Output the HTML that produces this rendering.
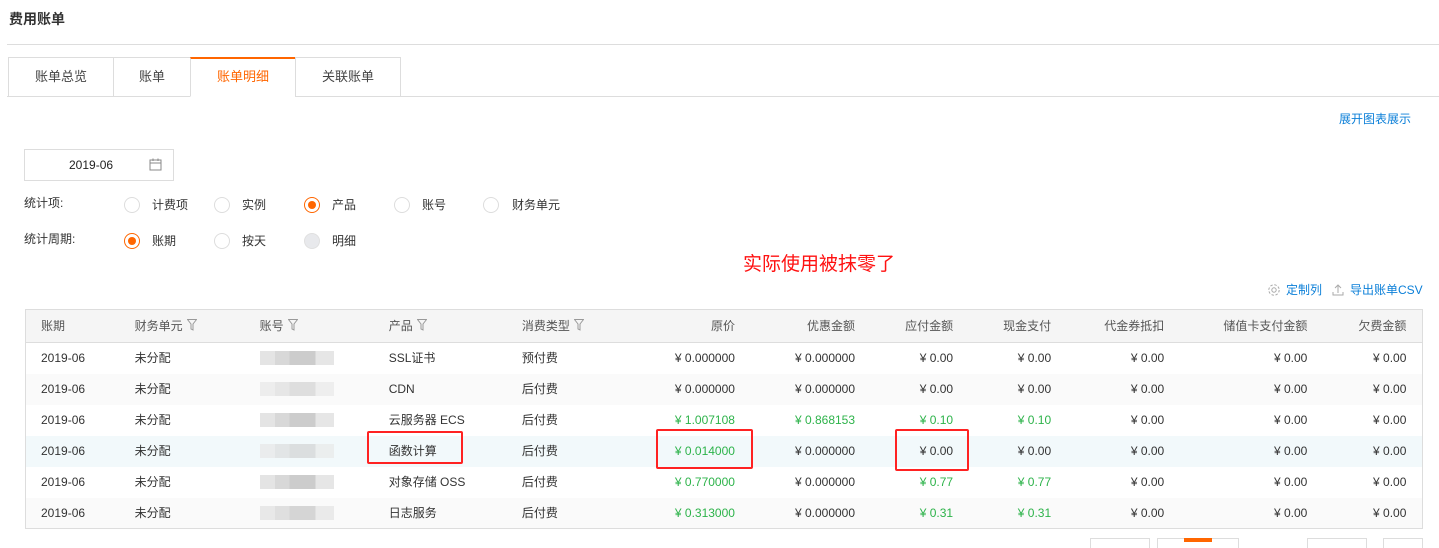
<!DOCTYPE html>
<html><head><meta charset="utf-8"><style>
*{margin:0;padding:0;box-sizing:border-box}
body{width:1439px;height:542px;overflow:hidden;background:#fff;font-family:"Liberation Sans","Noto Sans CJK SC",sans-serif;font-size:12px;color:#333;position:relative}
.a{position:absolute;line-height:14px}
.tab{position:absolute;top:57px;height:40px;border:1px solid #ddd;background:#fff;line-height:38px;text-align:center;font-size:13px;color:#444}
.radio{position:absolute;width:16px;height:16px;border:1px solid #ddd;border-radius:50%;background:#fff}
.radio.on{border-color:#f60}
.radio.on:after{content:"";position:absolute;left:3px;top:3px;width:8px;height:8px;border-radius:50%;background:#f60}
.lbl{position:absolute;font-size:12px;color:#333;line-height:14px}
table{position:absolute;left:25px;top:309px;width:1398px;border:1px solid #ddd;border-collapse:collapse;table-layout:fixed}
td,th{height:31px;font-weight:normal;white-space:nowrap;font-size:12px;line-height:14px;padding:0;vertical-align:middle}
th{height:33px;background:#f5f5f5;color:#555;border-bottom:1px solid #ddd;text-align:left}
.r{text-align:right}
tr:nth-child(odd) td{background:#fafafa}
tr.hl td{background:#f2f9fb!important}
.g{color:#2db34a}
.f{display:inline-block;width:10px;height:12px;vertical-align:-1px;margin-left:4px}
.blur{position:absolute;left:260px;width:74px;height:14px;background:linear-gradient(90deg,#e4e4e4 0 20%,#d8d8d8 20% 40%,#ccc 40% 75%,#e6e6e6 75%)}
.red{position:absolute;border:2px solid #f22;border-radius:2px}
.pg{position:absolute;top:538px;height:10px;border:1px solid #ddd;border-bottom:none}
</style></head><body>
<div class="a" style="left:9px;top:12px;font-size:14px;font-weight:bold;color:#333">费用账单</div>
<div class="a" style="left:7px;top:44px;width:1432px;height:1px;background:#ddd"></div>
<div class="a" style="left:7px;top:96px;width:1432px;height:1px;background:#ddd"></div>
<div class="tab" style="left:8px;width:106px">账单总览</div>
<div class="tab" style="left:113px;width:78px">账单</div>
<div class="tab" style="left:190px;width:106px;border-top:2px solid #f60;border-bottom-color:#fff;color:#f60;line-height:36px">账单明细</div>
<div class="tab" style="left:295px;width:106px">关联账单</div>
<div class="a" style="left:1339px;top:112px;color:#0b7fd8">展开图表展示</div>
<div class="a" style="left:24px;top:149px;width:150px;height:32px;border:1px solid #ddd;line-height:30px;padding-left:44px;color:#222">2019-06</div>
<svg class="a" style="left:149px;top:158px" width="13" height="13" viewBox="0 0 13 13" fill="none" stroke="#888"><rect x="1" y="2" width="11" height="10"/><line x1="1" y1="5" x2="12" y2="5"/><line x1="4" y1="0.5" x2="4" y2="3"/><line x1="9" y1="0.5" x2="9" y2="3"/></svg>
<div class="lbl" style="left:24px;top:196px">统计项:</div>
<div class="radio" style="left:124px;top:197px"></div><div class="lbl" style="left:152px;top:198px">计费项</div>
<div class="radio" style="left:214px;top:197px"></div><div class="lbl" style="left:242px;top:198px">实例</div>
<div class="radio on" style="left:304px;top:197px"></div><div class="lbl" style="left:332px;top:198px">产品</div>
<div class="radio" style="left:394px;top:197px"></div><div class="lbl" style="left:422px;top:198px">账号</div>
<div class="radio" style="left:483px;top:197px"></div><div class="lbl" style="left:512px;top:198px">财务单元</div>
<div class="lbl" style="left:24px;top:232px">统计周期:</div>
<div class="radio on" style="left:124px;top:233px"></div><div class="lbl" style="left:152px;top:234px">账期</div>
<div class="radio" style="left:214px;top:233px"></div><div class="lbl" style="left:242px;top:234px">按天</div>
<div class="radio" style="left:304px;top:233px;background:#e8e9ec;border-color:#e0e0e0"></div><div class="lbl" style="left:332px;top:234px">明细</div>
<div class="a" style="left:743px;top:255px;font-size:19px;line-height:20px;color:#f11">实际使用被抹零了</div>
<svg class="a" style="left:1267px;top:283px" width="14" height="14" viewBox="0 0 14 14" fill="none" stroke="#aaa"><circle cx="7" cy="7" r="2.2"/><circle cx="7" cy="7" r="5.2" stroke-dasharray="2.5 1.6"/></svg>
<div class="a" style="left:1286px;top:283px;color:#0b7fd8">定制列</div>
<svg class="a" style="left:1332px;top:283px" width="12" height="13" viewBox="0 0 12 13" fill="none" stroke="#aaa"><path d="M6 10V2M3 5l3-3 3 3M1 9v3h10V9"/></svg>
<div class="a" style="left:1350px;top:283px;color:#0b7fd8">导出账单CSV</div>
<table>
<colgroup><col style="width:109px"><col style="width:125px"><col style="width:129px"><col style="width:133px"><col style="width:100px"><col style="width:113px"><col style="width:120px"><col style="width:98px"><col style="width:98px"><col style="width:113px"><col style="width:143px"><col style="width:99px"><col style="width:16px"></colgroup>
<tr><th style="padding-left:15px">账期</th><th>财务单元<svg class="f" viewBox="0 0 10 12" fill="none" stroke="#999"><path d="M0.5 0.5h9L6 5v6L4 10V5z"/></svg></th><th>账号<svg class="f" viewBox="0 0 10 12" fill="none" stroke="#999"><path d="M0.5 0.5h9L6 5v6L4 10V5z"/></svg></th><th>产品<svg class="f" viewBox="0 0 10 12" fill="none" stroke="#999"><path d="M0.5 0.5h9L6 5v6L4 10V5z"/></svg></th><th>消费类型<svg class="f" viewBox="0 0 10 12" fill="none" stroke="#999"><path d="M0.5 0.5h9L6 5v6L4 10V5z"/></svg></th><th class="r">原价</th><th class="r">优惠金额</th><th class="r">应付金额</th><th class="r">现金支付</th><th class="r">代金券抵扣</th><th class="r">储值卡支付金额</th><th class="r">欠费金额</th><th></th></tr>
<tr><td style="padding-left:15px">2019-06</td><td>未分配</td><td></td><td>SSL证书</td><td>预付费</td><td class="r">¥ 0.000000</td><td class="r">¥ 0.000000</td><td class="r">¥ 0.00</td><td class="r">¥ 0.00</td><td class="r">¥ 0.00</td><td class="r">¥ 0.00</td><td class="r">¥ 0.00</td><td></td></tr>
<tr><td style="padding-left:15px">2019-06</td><td>未分配</td><td></td><td>CDN</td><td>后付费</td><td class="r">¥ 0.000000</td><td class="r">¥ 0.000000</td><td class="r">¥ 0.00</td><td class="r">¥ 0.00</td><td class="r">¥ 0.00</td><td class="r">¥ 0.00</td><td class="r">¥ 0.00</td><td></td></tr>
<tr><td style="padding-left:15px">2019-06</td><td>未分配</td><td></td><td>云服务器 ECS</td><td>后付费</td><td class="r g">¥ 1.007108</td><td class="r g">¥ 0.868153</td><td class="r g">¥ 0.10</td><td class="r g">¥ 0.10</td><td class="r">¥ 0.00</td><td class="r">¥ 0.00</td><td class="r">¥ 0.00</td><td></td></tr>
<tr class="hl"><td style="padding-left:15px">2019-06</td><td>未分配</td><td></td><td>函数计算</td><td>后付费</td><td class="r g">¥ 0.014000</td><td class="r">¥ 0.000000</td><td class="r">¥ 0.00</td><td class="r">¥ 0.00</td><td class="r">¥ 0.00</td><td class="r">¥ 0.00</td><td class="r">¥ 0.00</td><td></td></tr>
<tr><td style="padding-left:15px">2019-06</td><td>未分配</td><td></td><td>对象存储 OSS</td><td>后付费</td><td class="r g">¥ 0.770000</td><td class="r">¥ 0.000000</td><td class="r g">¥ 0.77</td><td class="r g">¥ 0.77</td><td class="r">¥ 0.00</td><td class="r">¥ 0.00</td><td class="r">¥ 0.00</td><td></td></tr>
<tr><td style="padding-left:15px">2019-06</td><td>未分配</td><td></td><td>日志服务</td><td>后付费</td><td class="r g">¥ 0.313000</td><td class="r">¥ 0.000000</td><td class="r g">¥ 0.31</td><td class="r g">¥ 0.31</td><td class="r">¥ 0.00</td><td class="r">¥ 0.00</td><td class="r">¥ 0.00</td><td></td></tr>
</table>
<div class="blur" style="top:351px"></div><div class="blur" style="top:382px;opacity:.6"></div><div class="blur" style="top:413px"></div><div class="blur" style="top:444px;opacity:.6"></div><div class="blur" style="top:475px"></div><div class="blur" style="top:506px;opacity:.8"></div>
<div class="red" style="left:367px;top:431px;width:96px;height:33px"></div>
<div class="red" style="left:656px;top:429px;width:97px;height:40px"></div>
<div class="red" style="left:895px;top:429px;width:74px;height:42px"></div>
<div class="pg" style="left:1090px;width:60px"></div>
<div class="pg" style="left:1157px;width:82px"></div>
<div class="a" style="left:1184px;top:538px;width:28px;height:4px;background:#f60"></div>
<div class="pg" style="left:1307px;width:60px"></div>
<div class="pg" style="left:1383px;width:40px"></div>
</body></html>
